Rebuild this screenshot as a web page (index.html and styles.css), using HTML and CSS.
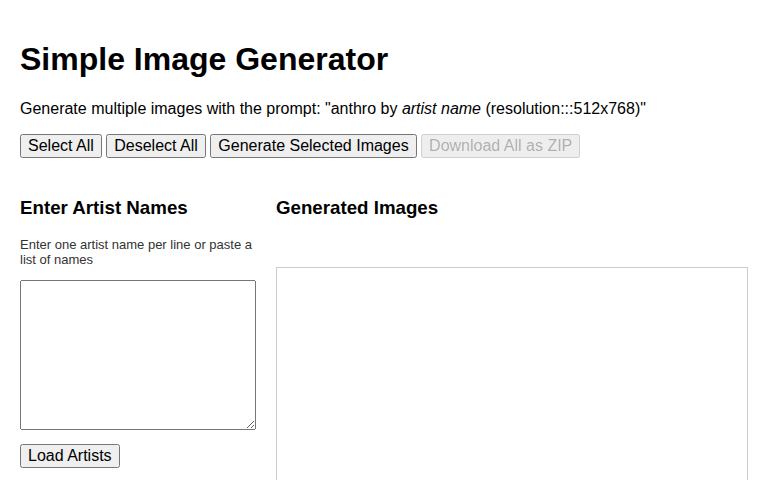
FILE: index.html
```html
<!DOCTYPE html>
<html lang="en">
<head>
<meta charset="utf-8">
<title>Simple Image Generator</title>
<link rel="stylesheet" href="styles.css">
</head>
<body>
<h1 class="title">Simple Image Generator</h1>
<p class="intro">Generate multiple images with the prompt: "anthro by <em>artist name</em> (resolution:::512x768)"</p>
<div class="toolbar">
  <button class="btn">Select All</button>
  <button class="btn">Deselect All</button>
  <button class="btn">Generate Selected Images</button>
  <button class="btn" disabled>Download All as ZIP</button>
</div>
<div class="layout">
  <section class="sidebar">
    <h3 class="section-title">Enter Artist Names</h3>
    <p class="hint">Enter one artist name per line or paste a list of names</p>
    <textarea class="artists"></textarea>
    <button class="btn load">Load Artists</button>
  </section>
  <section class="results">
    <h3 class="section-title">Generated Images</h3>
    <div class="status"></div>
    <div class="gallery"></div>
  </section>
</div>
</body>
</html>
```
FILE: styles.css
```css
html, body {
  margin: 0;
}
body {
  padding: 20px;
  font-family: "Liberation Sans", Arial, sans-serif;
  font-size: 16px;
  color: #000;
  background: #fff;
}
.title {
  font-size: 32px;
  margin: 21.44px 0;
}
.intro {
  margin: 16px 0;
}
.btn {
  font-family: inherit;
  font-size: 16px;
}
.layout {
  display: flex;
  gap: 20px;
  margin-top: 20px;
}
.sidebar {
  width: 236px;
  flex: none;
}
.results {
  flex: 1;
}
.section-title {
  font-size: 18.72px;
  margin: 18.72px 0;
}
.hint {
  font-size: 13px;
  color: #333;
  margin: 13px 0;
}
.artists {
  display: block;
  width: 100%;
  height: 150px;
  box-sizing: border-box;
  margin: 0 0 14px;
}
.status {
  height: 30px;
}
.gallery {
  border: 1px solid #ccc;
  min-height: 400px;
}
```
